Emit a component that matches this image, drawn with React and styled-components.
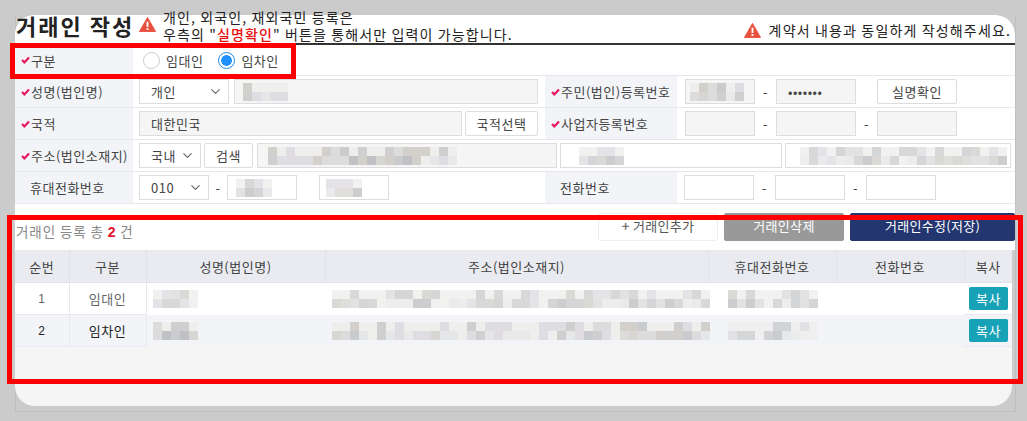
import React from "react";
import styled, { createGlobalStyle } from "styled-components";
import { ChevronDown } from "lucide-react";

const PALETTE = ["#e9e9e9", "#dcdcdc", "#cfcfcf", "#d8d6d3", "#dfdde2", "#c9cbce", "#e4e6e8", "#d3d0cc", "#eeeeec", "#bfc1c4"];

// fake blur blocks, the real values are pixelated in the picture
const mosaicCells = (cols, seed) => {
  const cells = [];
  let n = seed * 7919 + 13;
  for (let i = 0; i < cols * 2; i++) {
    n = (n * 1103515245 + 12345) % 2147483648;
    const top = i < cols;
    const idx = (n >> 8) % PALETTE.length;
    cells.push(top && idx % 3 === 0 ? PALETTE[8] : PALETTE[idx]);
  }
  return cells;
};

const Mosaic = ({ cols, seed, soft }) => (
  <MosaicGrid $cols={cols} $soft={soft}>
    {mosaicCells(cols, seed).map((color, i) => (
      <span key={i} style={{ background: color }} />
    ))}
  </MosaicGrid>
);

const Warning = () => (
  <svg width="17" height="15" viewBox="0 0 18 16">
    <path d="M9 0.5 L17.6 15.5 H0.4 Z" fill="#e9503f" stroke="#e9503f" strokeLinejoin="round" />
    <rect x="8" y="5" width="2" height="5.6" fill="#fff" />
    <rect x="8" y="11.8" width="2" height="2" fill="#fff" />
  </svg>
);

const Check = () => (
  <CheckMark width="9" height="8" viewBox="0 0 9 8">
    <path d="M1 4 L3.4 6.4 L8 1.4" fill="none" stroke="#e6175c" strokeWidth="2.2" />
  </CheckMark>
);

const Select = ({ value, width }) => (
  <SelectBox $width={width}>
    {value}
    <ChevronDown size={15} color="#666" strokeWidth={1.8} />
  </SelectBox>
);

const App = () => {
  return (
    <>
      <GlobalStyle />
      <Shell>
        <Card>
          <Header>
            <Title>거래인 작성</Title>
            <Warning />
            <Notice>
              개인, 외국인, 재외국민 등록은
              <br />
              우측의 "<RedText>실명확인</RedText>" 버튼을 통해서만 입력이 가능합니다.
            </Notice>
            <RightNotice>
              <Warning />
              계약서 내용과 동일하게 작성해주세요.
            </RightNotice>
          </Header>

          <Form>
            <Row $first>
              <Label><Check />구분</Label>
              <Cell>
                <Radio />
                <RadioText>임대인</RadioText>
                <Radio $on />
                <RadioText>임차인</RadioText>
              </Cell>
            </Row>

            <Row>
              <Label><Check />성명(법인명)</Label>
              <LeftCell>
                <Select value="개인" width={90} />
                <Field $width={304} $gray><Mosaic cols={5} seed={1} /></Field>
              </LeftCell>
              <WideLabel><Check />주민(법인)등록번호</WideLabel>
              <Cell $pad={8}>
                <Field $width={70} $gray $left={4}><Mosaic cols={6} seed={2} /></Field>
                <Dash />
                <Field $width={80} $gray $left={11}>•••••••</Field>
                <Dash $hidden />
                <Button>실명확인</Button>
              </Cell>
            </Row>

            <Row>
              <Label><Check />국적</Label>
              <NationCell>
                <Field $width={323} $gray $left={11}>대한민국</Field>
                <Button $width={73}>국적선택</Button>
              </NationCell>
              <WideLabel><Check />사업자등록번호</WideLabel>
              <Cell $pad={8}>
                <Field $width={70} $gray />
                <Dash />
                <Field $width={80} $gray />
                <Dash />
                <Field $width={80} $gray />
              </Cell>
            </Row>

            <Row>
              <Label><Check />주소(법인소재지)</Label>
              <AddressCell>
                <Select value="국내" width={62} />
                <Button $width={49}>검색</Button>
                <Field $width={300} $gray $left={10}><Mosaic cols={21} seed={3} /></Field>
                <Field $width={222} $left={18}><Mosaic cols={5} seed={4} soft /></Field>
                <Field $width={226} $left={14}><Mosaic cols={23} seed={5} soft /></Field>
              </AddressCell>
            </Row>

            <Row>
              <Label $plain>휴대전화번호</Label>
              <LeftCell>
                <Select value="010" width={70} />
                <Dash $tight={8} />
                <Field $width={70} $left={8}><Mosaic cols={4} seed={6} soft /></Field>
                <Dash $tight={12} $hidden />
                <Field $width={70} $left={6}><Mosaic cols={4} seed={7} soft /></Field>
              </LeftCell>
              <WideLabel $plain>전화번호</WideLabel>
              <Cell $pad={7}>
                <Field $width={70} />
                <Dash />
                <Field $width={70} />
                <Dash />
                <Field $width={70} />
              </Cell>
            </Row>
          </Form>

          <Toolbar>
            <Count>거래인 등록 총 <strong>2</strong> 건</Count>
            <ActionGroup>
              <Action $width={120}><b>+</b> 거래인추가</Action>
              <Action $width={120} $kind="gray">거래인삭제</Action>
              <Action $width={165} $kind="navy">거래인수정(저장)</Action>
            </ActionGroup>
          </Toolbar>

          <Table>
            <colgroup>
              <col width="54" />
              <col width="77" />
              <col width="179" />
              <col width="383" />
              <col width="128" />
              <col width="128" />
              <col width="48" />
            </colgroup>
            <thead>
              <tr>
                <th>순번</th>
                <th>구분</th>
                <th>성명(법인명)</th>
                <th>주소(법인소재지)</th>
                <th>휴대전화번호</th>
                <th>전화번호</th>
                <th>복사</th>
              </tr>
            </thead>
            <tbody>
              <BodyRow>
                <NumberCell>1</NumberCell>
                <td>임대인</td>
                <BlurCell><Mosaic cols={5} seed={8} soft /></BlurCell>
                <BlurCell $indent={7}><Mosaic cols={42} seed={9} soft /></BlurCell>
                <BlurCell $indent={20}><Mosaic cols={10} seed={10} soft /></BlurCell>
                <td />
                <td><CopyButton>복사</CopyButton></td>
              </BodyRow>
              <BodyRow $alt>
                <NumberCell>2</NumberCell>
                <td>임차인</td>
                <BlurCell><Mosaic cols={5} seed={11} /></BlurCell>
                <BlurCell $indent={7}><Mosaic cols={42} seed={12} /></BlurCell>
                <BlurCell $indent={20}><Mosaic cols={10} seed={13} soft /></BlurCell>
                <td />
                <td><CopyButton>복사</CopyButton></td>
              </BodyRow>
            </tbody>
          </Table>

          <Highlight $x={-5} $y={28} $w={286} $h={36} />
          <Highlight $x={-8} $y={200} $w={1016} $h={169} />
        </Card>
      </Shell>
    </>
  );
};

const GlobalStyle = createGlobalStyle`
  html, body {
    margin: 0;
    background: #cbcbcb;
  }
  body {
    font-family: "Noto Sans CJK KR", "Noto Sans", sans-serif;
    color: #444;
    letter-spacing: 0.5px;
    overflow: hidden;
  }
`;

const Shell = styled.div`
  box-sizing: border-box;
  width: 1001px;
  height: 397px;
  margin: 15px 0 0 15px;
  border: 1px solid #c0c0c0;
  border-top: 0;
`;

const Card = styled.div`
  position: relative;
  display: flex;
  flex-direction: column;
  width: 997px;
  height: 391px;
  margin-left: -1px;
  background: #f5f5f5;
  border-radius: 20px;
`;

const Header = styled.header`
  box-sizing: border-box;
  flex: none;
  display: flex;
  align-items: flex-start;
  gap: 7px;
  width: 1000px;
  height: 30px;
  background: #fff;
  border-radius: 20px 20px 0 0;
  border-bottom: 2px solid #333;

  > svg {
    margin-top: 2px;
  }
`;

const Title = styled.h1`
  margin: -5px 0 0 1px;
  width: 116px;
  font-size: 22px;
  line-height: 30px;
  font-weight: 700;
  color: #222;
  letter-spacing: 2px;
  white-space: nowrap;
`;

const Notice = styled.p`
  margin: -6px 0 0;
  font-size: 14px;
  line-height: 17px;
  color: #222;
  letter-spacing: 1.12px;
  white-space: nowrap;
`;

const RedText = styled.span`
  color: #e81010;
  font-weight: 500;
`;

const RightNotice = styled.div`
  display: flex;
  align-items: center;
  gap: 8px;
  margin: 7px 4px 0 auto;
  font-size: 14px;
  line-height: 16px;
  color: #222;
  letter-spacing: 1.15px;
  white-space: nowrap;
`;

const Form = styled.div`
  flex: none;
  width: 1000px;
  background: #fff;
`;

const Row = styled.div`
  box-sizing: border-box;
  display: flex;
  height: ${(p) => (p.$first ? 31 : 32)}px;
  border-bottom: 1px solid #e6e8ec;
`;

const Label = styled.div`
  flex: none;
  box-sizing: border-box;
  display: flex;
  align-items: center;
  width: 118px;
  padding-left: ${(p) => (p.$plain ? 15 : 6)}px;
  background: #f2f4f8;
  font-size: 13px;
  color: #444;
  white-space: nowrap;
`;

const WideLabel = styled(Label)`
  width: 132px;
`;

const CheckMark = styled.svg`
  flex: none;
  margin-right: 1px;
`;

const Cell = styled.div`
  flex: 1;
  display: flex;
  align-items: center;
  padding-left: ${(p) => p.$pad || 10}px;
  font-size: 13px;
`;

const LeftCell = styled(Cell)`
  flex: none;
  box-sizing: border-box;
  width: 412px;
  padding-left: 6px;
  gap: 5px;
`;

const NationCell = styled(LeftCell)`
  gap: 3px;
`;

const AddressCell = styled(LeftCell)`
  flex: 1;
  gap: 3px;

  > button {
    margin-right: 1px;
  }
`;

const Radio = styled.span`
  box-sizing: border-box;
  flex: none;
  width: 17px;
  height: 17px;
  border-radius: 50%;
  border: 1px solid ${(p) => (p.$on ? "#1e88e5" : "#ccc")};
  background: ${(p) => (p.$on ? "radial-gradient(circle, #1e90ff 0 5px, #fff 5.6px)" : "#fff")};
`;

const RadioText = styled.span`
  margin: 0 15px 0 6px;
  font-size: 13px;
  color: #444;
`;

const SelectBox = styled.div`
  box-sizing: border-box;
  flex: none;
  display: flex;
  align-items: center;
  justify-content: space-between;
  width: ${(p) => p.$width}px;
  height: 25px;
  padding: 0 5px 0 11px;
  background: #fff;
  border: 1px solid #ddd;
  font-size: 13px;
  color: #444;
`;

const Field = styled.div`
  box-sizing: border-box;
  flex: none;
  display: flex;
  align-items: center;
  width: ${(p) => p.$width}px;
  height: 25px;
  padding-left: ${(p) => p.$left || 8}px;
  background: ${(p) => (p.$gray ? "#f5f5f5" : "#fff")};
  border: 1px solid #ddd;
  font-size: 13px;
  color: #444;
`;

const Dash = styled.span`
  flex: none;
  width: ${(p) => p.$tight || 21}px;
  text-align: center;
  font-size: 13px;
  visibility: ${(p) => (p.$hidden ? "hidden" : "visible")};

  &::before {
    content: "-";
  }
`;

const Button = styled.button`
  box-sizing: border-box;
  flex: none;
  width: ${(p) => p.$width || 80}px;
  height: 25px;
  padding: 0;
  background: #fff;
  border: 1px solid #ddd;
  border-radius: 2px;
  font-family: inherit;
  font-size: 13px;
  letter-spacing: inherit;
  color: #444;
`;

const MosaicGrid = styled.div`
  display: grid;
  grid-template-columns: repeat(${(p) => p.$cols}, 9px);
  grid-auto-rows: 9px;
  flex: none;
  opacity: ${(p) => (p.$soft ? 0.8 : 1)};
`;

const Toolbar = styled.div`
  flex: none;
  display: flex;
  align-items: flex-end;
  justify-content: space-between;
  box-sizing: border-box;
  width: 1000px;
  height: 46px;
  padding: 9px 0 9px 1px;
  background: #fff;
`;

const Count = styled.div`
  font-size: 13.5px;
  line-height: 18px;
  color: #888;
  letter-spacing: 0.9px;

  strong {
    color: #e8112d;
    font-family: "Liberation Sans", sans-serif;
    font-size: 14px;
  }
`;

const ActionGroup = styled.div`
  display: flex;
  gap: 6px;
`;

const ACTION_COLORS = {
  gray: "background: #999; border-color: #999; color: #fff;",
  navy: "background: #23366f; border-color: #23366f; color: #fff;",
};

const Action = styled.button`
  box-sizing: border-box;
  width: ${(p) => p.$width}px;
  height: 28px;
  padding: 0 0 4px;
  background: #fff;
  border: 1px solid #eee;
  border-radius: 2px;
  font-family: inherit;
  font-size: 13px;
  letter-spacing: 0.3px;
  color: #555;
  ${(p) => ACTION_COLORS[p.$kind] || ""}

  b {
    color: #777;
  }
`;

const Table = styled.table`
  flex: none;
  width: 997px;
  border-collapse: collapse;
  table-layout: fixed;
  font-size: 13px;
  background: #fff;

  th {
    height: 32px;
    padding: 0;
    background: #e9ebf0;
    border-right: 1px solid #e0e2e8;
    border-bottom: 1px solid #dfe1e8;
    font-weight: 400;
    color: #444;
  }

  th:last-child {
    border-right: 0;
  }
`;

const BodyRow = styled.tr`
  background: ${(p) => (p.$alt ? "#f2f4f8" : "#fff")};
  color: ${(p) => (p.$alt ? "#222" : "#666")};

  td {
    height: 31px;
    padding: 0;
    text-align: center;
    border-bottom: 1px solid #e8e9ee;
    border-right: 1px solid #e8e9ee;
  }

  td:last-child {
    border-right: 0;
  }

  td:nth-child(3),
  td:nth-child(4),
  td:nth-child(5),
  td:nth-child(6) {
    border-right: 0;
    border-bottom: 0;
  }
`;

const NumberCell = styled.td`
  font-family: "Liberation Sans", sans-serif;
  font-size: 12px;
`;

const BlurCell = styled.td`
  padding-left: ${(p) => p.$indent || 6}px !important;

  ${MosaicGrid} {
    margin-right: -40px;
  }
`;

const CopyButton = styled.button`
  display: block;
  box-sizing: border-box;
  width: 39px;
  height: 23px;
  margin: 0 0 0 5px;
  padding: 0;
  background: #17a2b8;
  border: 0;
  border-radius: 2px;
  font-family: inherit;
  font-size: 13px;
  letter-spacing: inherit;
  color: #fff;
`;

const Highlight = styled.div`
  position: absolute;
  left: ${(p) => p.$x}px;
  top: ${(p) => p.$y}px;
  box-sizing: border-box;
  width: ${(p) => p.$w}px;
  height: ${(p) => p.$h}px;
  border: 5px solid #f00;
  pointer-events: none;
`;

export default App;
